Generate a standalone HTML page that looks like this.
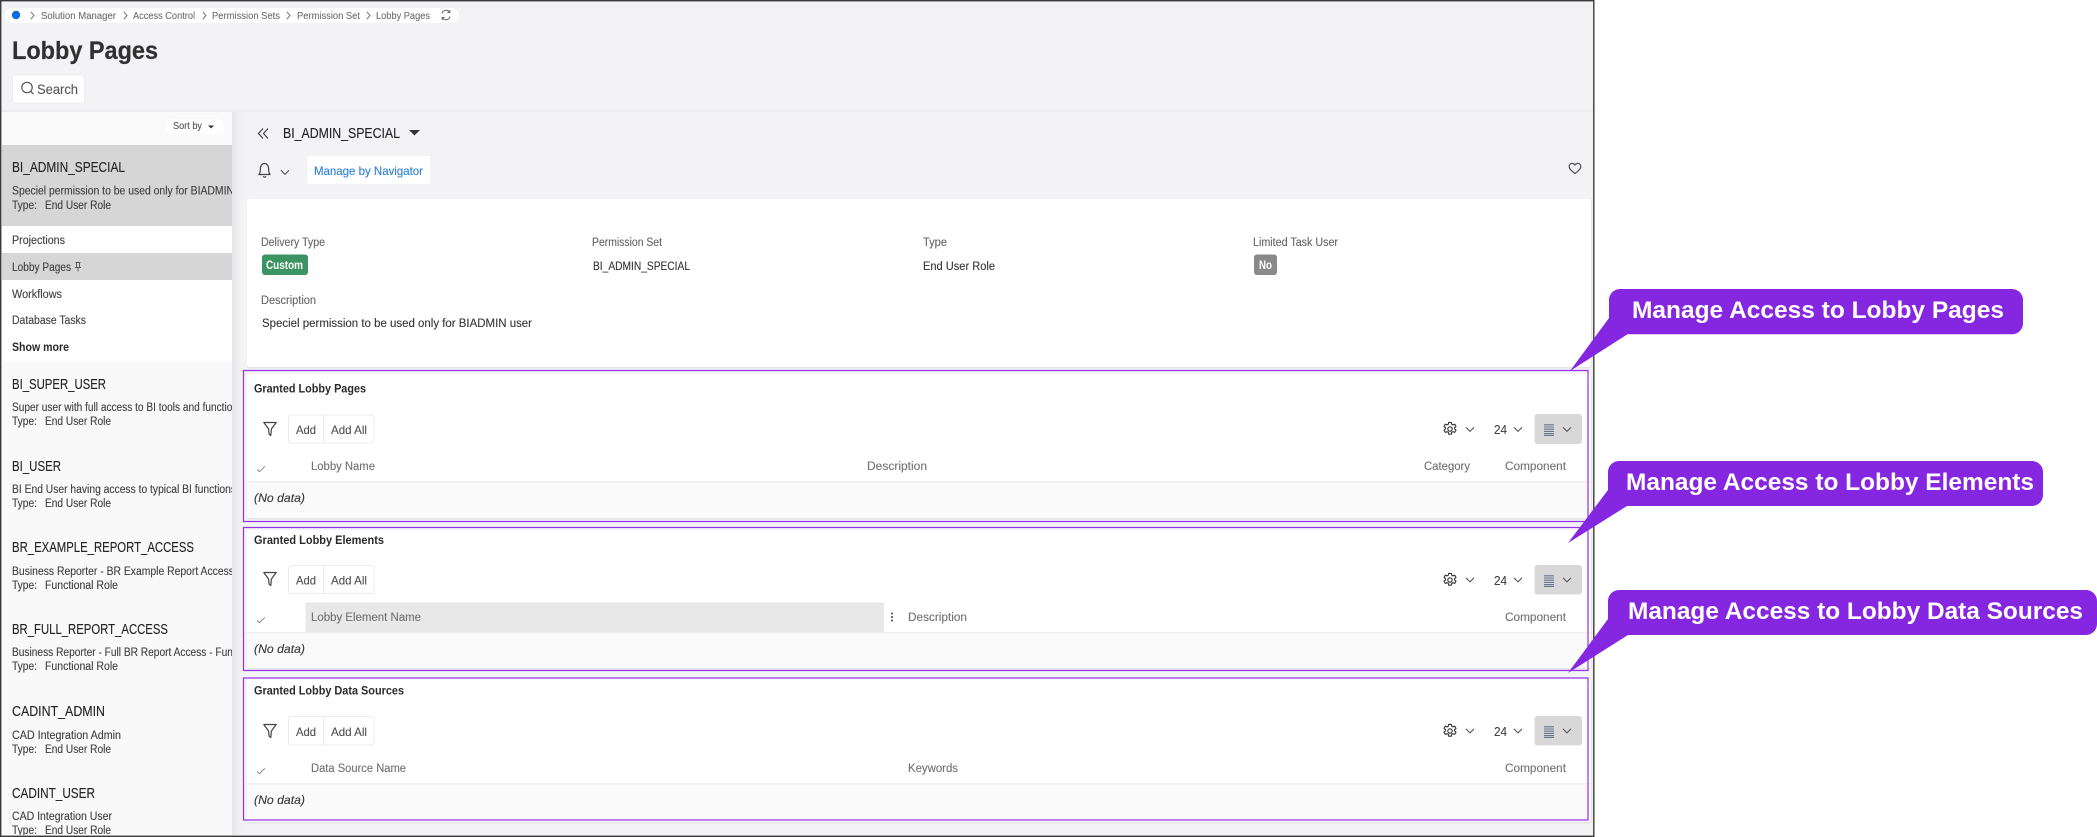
<!DOCTYPE html>
<html lang="en"><head><meta charset="utf-8"><title>Lobby Pages</title>
<style>
html,body{margin:0;padding:0;background:#fff;width:2097px;height:837px;overflow:hidden}
svg{display:block}
text{font-family:"Liberation Sans",Arial,sans-serif;font-size:11.5px;fill:#4a4a4a;stroke:#4a4a4a;stroke-width:.12}
.bc{font-size:10.5px;fill:#707070;stroke:#707070}
.h{font-size:14.5px;fill:#242424;stroke:#242424}
.d{font-size:11.5px;fill:#404040;stroke:#404040}
.l{font-size:11.5px;fill:#666;stroke:#666}
.v{font-size:11.5px;fill:#363636;stroke:#363636}
.b{font-weight:bold;fill:#2a2a2a;stroke:none}
.c{font-size:11.5px;fill:#727272;stroke:#727272}
.a{font-size:12px;fill:#505050;stroke:#505050}
.n{font-size:12px;font-style:italic;fill:#383838;stroke:#383838}
.t{font-size:24px;font-weight:bold;fill:#fff;stroke:none}
.w{font-size:11.5px;font-weight:bold;fill:#fff;stroke:none}
.soft{filter:blur(.28px)}
</style></head><body>
<svg width="2097" height="837" viewBox="0 0 2097 837" xmlns="http://www.w3.org/2000/svg">
<defs>
<symbol id="chv" viewBox="0 0 8 5" overflow="visible"><path d="M.3.6 4 4.4 7.7.6" fill="none" stroke="#555" stroke-width="1.1" stroke-linecap="round" stroke-linejoin="round"/></symbol>
<symbol id="sep" viewBox="0 0 5 9" overflow="visible"><path d="M.8.8 4 4.5.8 8.2" fill="none" stroke="#777" stroke-width="1"/></symbol>
<symbol id="flt" viewBox="0 0 14 15" overflow="visible"><path d="M.8 1h12.400L8.400 7.500 7.800 14 6.100 12.600 5.600 7.500Z" fill="none" stroke="#444" stroke-width="1.200" stroke-linejoin="round"/></symbol>
<symbol id="gear" viewBox="0 0 14 14" overflow="visible"><circle cx="7" cy="7" r="2.200" fill="none" stroke="#333" stroke-width="1.100"/><path d="M5.700.4h2.600l.4 1.800 1.200.7 1.800-.7 1.300 2.200-1.400 1.200v1.400l1.400 1.200-1.300 2.200-1.800-.7-1.200.7-.4 1.800H5.700l-.4-1.800-1.200-.7-1.800.7-1.300-2.200 1.400-1.200V5.600L1 4.400l1.300-2.200 1.800.7 1.200-.7Z" fill="none" stroke="#333" stroke-width="1.100" stroke-linejoin="round"/></symbol>
<symbol id="rows" viewBox="0 0 10 12" overflow="visible"><path d="M0 .8h10M0 3h10M0 5.200h10M0 7.400h10M0 9.600h10M0 11.400h10" stroke="#64748b" stroke-width="1.100"/></symbol>
<symbol id="chk" viewBox="0 0 9 7" overflow="visible"><path d="M.6 4 3 6.200 8.400.8" fill="none" stroke="#888" stroke-width="1"/></symbol>
<clipPath id="lp"><rect x="2" y="112" width="230" height="723"/></clipPath>
<linearGradient id="sh" x1="0" x2="1" y1="0" y2="0"><stop offset="0" stop-color="#e6e5e8"/><stop offset="1" stop-color="#f3f2f5"/></linearGradient>
</defs>

<g class="soft">
<!-- frame -->
<rect x=".7" y=".7" width="1593.100" height="835.600" fill="#f3f2f5" stroke="#3a3a3a" stroke-width="1.400"/>

<!-- breadcrumb -->
<rect x="5" y="8" width="454" height="15" rx="7.500" fill="#fff"/>
<circle cx="16" cy="15" r="4.200" fill="#0b6bdb"/>
<use href="#sep" x="30" y="11" width="5" height="9"/>
<text class="bc" x="41" y="19" textLength="75" lengthAdjust="spacingAndGlyphs">Solution Manager</text>
<use href="#sep" x="123" y="11" width="5" height="9"/>
<text class="bc" x="133" y="19" textLength="62" lengthAdjust="spacingAndGlyphs">Access Control</text>
<use href="#sep" x="202" y="11" width="5" height="9"/>
<text class="bc" x="212" y="19" textLength="68" lengthAdjust="spacingAndGlyphs">Permission Sets</text>
<use href="#sep" x="286" y="11" width="5" height="9"/>
<text class="bc" x="297" y="19" textLength="63" lengthAdjust="spacingAndGlyphs">Permission Set</text>
<use href="#sep" x="366" y="11" width="5" height="9"/>
<text class="bc" x="376" y="19" textLength="54" lengthAdjust="spacingAndGlyphs">Lobby Pages</text>
<path d="M442 13.500a4.200 4.200 0 0 1 7.500-1.500M450 16.500a4.200 4.200 0 0 1-7.500 1.500M449.800 10v2.500h-2.400M442.200 20v-2.500h2.400" fill="none" stroke="#666" stroke-width="1"/>

<!-- title -->
<text x="12" y="59" textLength="146" lengthAdjust="spacingAndGlyphs" style="font-size:25px;font-weight:bold;fill:#303030;stroke:#303030;stroke-width:.2">Lobby Pages</text>
<rect x="12.500" y="75" width="72" height="28" rx="3" fill="#fff" stroke="#eeedf0"/>
<circle cx="27" cy="87.500" r="5.200" fill="none" stroke="#555" stroke-width="1.200"/><path d="M30.700 91.300 33.500 94.200" stroke="#555" stroke-width="1.200"/>
<text x="37" y="94" textLength="41" lengthAdjust="spacingAndGlyphs" style="font-size:14px;fill:#555;stroke:#555">Search</text>

<!-- header separator and left shadow -->
<rect x="2" y="110" width="1591" height="2" fill="#ecebee"/>
<rect x="232" y="112" width="10" height="723" fill="url(#sh)"/>

<!-- left panel -->
<rect x="2" y="112" width="230" height="33" fill="#fafafa"/>
<rect x="166" y="119" width="58" height="15" rx="7.500" fill="#fff"/>
<text x="173" y="129" textLength="29" lengthAdjust="spacingAndGlyphs" style="font-size:10.500px;fill:#555;stroke:#555">Sort by</text>
<path d="M208 125.500h6l-3 3Z" fill="#333"/>
<rect x="2" y="145" width="230" height="81" fill="#d6d6d6"/>
<rect x="2" y="226" width="230" height="136" fill="#fff"/>
<rect x="2" y="253" width="230" height="27" fill="#d6d6d6"/>
<rect x="2" y="362" width="230" height="473" fill="#f9f9f9"/>
<g clip-path="url(#lp)">
<text class="h" x="12" y="172" textLength="113" lengthAdjust="spacingAndGlyphs">BI_ADMIN_SPECIAL</text>
<text class="d" x="12" y="194.500" textLength="222" lengthAdjust="spacingAndGlyphs">Speciel permission to be used only for BIADMIN</text>
<text class="d" x="12" y="209" textLength="25" lengthAdjust="spacingAndGlyphs">Type:</text><text class="d" x="45" y="209" textLength="66" lengthAdjust="spacingAndGlyphs">End User Role</text>
<text class="d" x="12" y="244" textLength="53" lengthAdjust="spacingAndGlyphs">Projections</text>
<text class="d" x="12" y="271" textLength="59" lengthAdjust="spacingAndGlyphs">Lobby Pages</text>
<path d="M75.500 262.500h5M76.500 262.500v5M79.500 262.500v5M75 267.500h6M78 267.500v4" fill="none" stroke="#555" stroke-width=".9"/>
<text class="d" x="12" y="298" textLength="50" lengthAdjust="spacingAndGlyphs">Workflows</text>
<text class="d" x="12" y="324" textLength="74" lengthAdjust="spacingAndGlyphs">Database Tasks</text>
<text class="d b" x="12" y="351" textLength="57" lengthAdjust="spacingAndGlyphs">Show more</text>

<text class="h" x="12" y="389" textLength="94" lengthAdjust="spacingAndGlyphs">BI_SUPER_USER</text>
<text class="d" x="12" y="411" textLength="226" lengthAdjust="spacingAndGlyphs">Super user with full access to BI tools and function</text>
<text class="d" x="12" y="425" textLength="25" lengthAdjust="spacingAndGlyphs">Type:</text><text class="d" x="45" y="425" textLength="66" lengthAdjust="spacingAndGlyphs">End User Role</text>

<text class="h" x="12" y="471" textLength="49" lengthAdjust="spacingAndGlyphs">BI_USER</text>
<text class="d" x="12" y="493" textLength="224" lengthAdjust="spacingAndGlyphs">BI End User having access to typical BI functions</text>
<text class="d" x="12" y="507" textLength="25" lengthAdjust="spacingAndGlyphs">Type:</text><text class="d" x="45" y="507" textLength="66" lengthAdjust="spacingAndGlyphs">End User Role</text>

<text class="h" x="12" y="552" textLength="182" lengthAdjust="spacingAndGlyphs">BR_EXAMPLE_REPORT_ACCESS</text>
<text class="d" x="12" y="575" textLength="222" lengthAdjust="spacingAndGlyphs">Business Reporter - BR Example Report Access</text>
<text class="d" x="12" y="589" textLength="25" lengthAdjust="spacingAndGlyphs">Type:</text><text class="d" x="45" y="589" textLength="73" lengthAdjust="spacingAndGlyphs">Functional Role</text>

<text class="h" x="12" y="634" textLength="156" lengthAdjust="spacingAndGlyphs">BR_FULL_REPORT_ACCESS</text>
<text class="d" x="12" y="656" textLength="226" lengthAdjust="spacingAndGlyphs">Business Reporter - Full BR Report Access - Func</text>
<text class="d" x="12" y="670" textLength="25" lengthAdjust="spacingAndGlyphs">Type:</text><text class="d" x="45" y="670" textLength="73" lengthAdjust="spacingAndGlyphs">Functional Role</text>

<text class="h" x="12" y="716" textLength="93" lengthAdjust="spacingAndGlyphs">CADINT_ADMIN</text>
<text class="d" x="12" y="739" textLength="109" lengthAdjust="spacingAndGlyphs">CAD Integration Admin</text>
<text class="d" x="12" y="753" textLength="25" lengthAdjust="spacingAndGlyphs">Type:</text><text class="d" x="45" y="753" textLength="66" lengthAdjust="spacingAndGlyphs">End User Role</text>

<text class="h" x="12" y="798" textLength="83" lengthAdjust="spacingAndGlyphs">CADINT_USER</text>
<text class="d" x="12" y="820" textLength="100" lengthAdjust="spacingAndGlyphs">CAD Integration User</text>
<text class="d" x="12" y="834" textLength="25" lengthAdjust="spacingAndGlyphs">Type:</text><text class="d" x="45" y="834" textLength="66" lengthAdjust="spacingAndGlyphs">End User Role</text>
</g>

<!-- detail header -->
<path d="M263 128.500 258.500 133.500 263 138.500M268 128.500 263.500 133.500 268 138.500" fill="none" stroke="#444" stroke-width="1.200"/>
<text class="h" x="283" y="138" textLength="117" lengthAdjust="spacingAndGlyphs">BI_ADMIN_SPECIAL</text>
<path d="M409 130h11l-5.500 5.500Z" fill="#333"/>
<path d="M258.800 174.500c1.900-1.700 1.500-3.600 1.600-6 .1-3 1.800-5 4.100-5s4 2 4.100 5c.1 2.400-.3 4.300 1.600 6ZM263 176.300a1.800 1.800 0 0 0 3 0" fill="none" stroke="#444" stroke-width="1.200" stroke-linejoin="round"/>
<use href="#chv" x="281" y="170" width="8" height="5"/>
<rect x="307.500" y="156" width="122.500" height="28" rx="2" fill="#fff"/>
<text x="314" y="175" textLength="109" lengthAdjust="spacingAndGlyphs" style="font-size:12px;fill:#2b7fd6;stroke:#2b7fd6">Manage by Navigator</text>
<path d="M1575 173.500c-3-2.300-5.800-4.400-5.800-7 0-3.400 4-4.200 5.800-1.600 1.800-2.600 5.800-1.800 5.800 1.600 0 2.600-2.800 4.700-5.800 7Z" fill="none" stroke="#555" stroke-width="1.200"/>

<!-- info card -->
<rect x="247" y="200" width="1345" height="168.500" rx="3" fill="#e4e4e6"/>
<rect x="247" y="199" width="1344" height="168" rx="3" fill="#fff"/>
<text class="l" x="261" y="246" textLength="64" lengthAdjust="spacingAndGlyphs">Delivery Type</text>
<rect x="262" y="254.500" width="46" height="20.500" rx="3" fill="#3d9463"/>
<text class="w" x="266" y="269" textLength="37" lengthAdjust="spacingAndGlyphs">Custom</text>
<text class="l" x="592" y="246" textLength="70" lengthAdjust="spacingAndGlyphs">Permission Set</text>
<text class="v" x="593" y="270" textLength="97" lengthAdjust="spacingAndGlyphs">BI_ADMIN_SPECIAL</text>
<text class="l" x="923" y="246" textLength="24" lengthAdjust="spacingAndGlyphs">Type</text>
<text class="v" x="923" y="270" textLength="72" lengthAdjust="spacingAndGlyphs">End User Role</text>
<text class="l" x="1253" y="246" textLength="85" lengthAdjust="spacingAndGlyphs">Limited Task User</text>
<rect x="1254" y="254.500" width="23" height="20.500" rx="3" fill="#8a8a8a"/>
<text class="w" x="1259" y="269" textLength="13" lengthAdjust="spacingAndGlyphs">No</text>
<text class="l" x="261" y="304" textLength="55" lengthAdjust="spacingAndGlyphs">Description</text>
<text class="v" x="262" y="327" textLength="270" lengthAdjust="spacingAndGlyphs">Speciel permission to be used only for BIADMIN user</text>

<!-- section 1 -->
<rect x="247" y="375" width="1345" height="144.500" rx="3" fill="#e4e4e6"/>
<rect x="247" y="374" width="1344" height="144" rx="3" fill="#fff"/>
<rect x="247" y="482" width="1344" height="35.500" fill="#fafafa"/><rect x="247" y="481" width="1344" height="1.500" fill="#efefef"/>
<text class="v b" x="254" y="392.500" textLength="112" lengthAdjust="spacingAndGlyphs">Granted Lobby Pages</text>
<use href="#flt" x="263" y="421.500" width="14" height="15"/>
<rect x="288.500" y="415" width="85.500" height="28" rx="3" fill="#fff" stroke="#ececec"/><path d="M323.500 415v28" stroke="#ececec"/>
<text class="a" x="296" y="434" textLength="20" lengthAdjust="spacingAndGlyphs">Add</text>
<text class="a" x="331" y="434" textLength="36" lengthAdjust="spacingAndGlyphs">Add All</text>
<use href="#gear" x="1443" y="422" width="14" height="14"/><use href="#chv" x="1466" y="427" width="8" height="5"/>
<text class="a" x="1494" y="434" textLength="13" lengthAdjust="spacingAndGlyphs" style="font-size:13px;fill:#404040;stroke:#404040">24</text><use href="#chv" x="1514" y="427" width="8" height="5"/>
<rect x="1534.500" y="414" width="47.500" height="30" rx="3" fill="#d8d8d8"/><use href="#rows" x="1544" y="424" width="10" height="12"/><use href="#chv" x="1563" y="427" width="8" height="5"/>
<use href="#chk" x="256.500" y="465.500" width="9" height="7"/>
<text class="c" x="311" y="470" textLength="64" lengthAdjust="spacingAndGlyphs">Lobby Name</text>
<text class="c" x="867" y="470" textLength="60" lengthAdjust="spacingAndGlyphs">Description</text>
<text class="c" x="1424" y="470" textLength="46" lengthAdjust="spacingAndGlyphs">Category</text>
<text class="c" x="1505" y="470" textLength="61" lengthAdjust="spacingAndGlyphs">Component</text>
<text class="n" x="254" y="502" textLength="51" lengthAdjust="spacingAndGlyphs">(No data)</text>

<!-- section 2 -->
<rect x="247" y="531" width="1345" height="138.500" rx="3" fill="#e4e4e6"/>
<rect x="247" y="530" width="1344" height="138" rx="3" fill="#fff"/>
<rect x="247" y="632.500" width="1344" height="35.500" fill="#fafafa"/><rect x="247" y="632" width="1344" height="1.500" fill="#efefef"/>
<text class="v b" x="254" y="544" textLength="130" lengthAdjust="spacingAndGlyphs">Granted Lobby Elements</text>
<use href="#flt" x="263" y="571.500" width="14" height="15"/>
<rect x="288.500" y="565.500" width="85.500" height="28" rx="3" fill="#fff" stroke="#ececec"/><path d="M323.500 565.500v28" stroke="#ececec"/>
<text class="a" x="296" y="584.500" textLength="20" lengthAdjust="spacingAndGlyphs">Add</text>
<text class="a" x="331" y="584.500" textLength="36" lengthAdjust="spacingAndGlyphs">Add All</text>
<use href="#gear" x="1443" y="573" width="14" height="14"/><use href="#chv" x="1466" y="577.500" width="8" height="5"/>
<text class="a" x="1494" y="585" textLength="13" lengthAdjust="spacingAndGlyphs" style="font-size:13px;fill:#404040;stroke:#404040">24</text><use href="#chv" x="1514" y="577.500" width="8" height="5"/>
<rect x="1534.500" y="565" width="47.500" height="29.500" rx="3" fill="#d8d8d8"/><use href="#rows" x="1544" y="575" width="10" height="12"/><use href="#chv" x="1563" y="577.500" width="8" height="5"/>
<rect x="305.500" y="602.500" width="578.500" height="29.500" fill="#e8e8e8"/>
<use href="#chk" x="256.500" y="616.500" width="9" height="7"/>
<text class="c" x="311" y="621" textLength="110" lengthAdjust="spacingAndGlyphs">Lobby Element Name</text>
<circle cx="892" cy="613.500" r="1" fill="#444"/><circle cx="892" cy="617" r="1" fill="#444"/><circle cx="892" cy="620.500" r="1" fill="#444"/>
<text class="c" x="908" y="621" textLength="59" lengthAdjust="spacingAndGlyphs">Description</text>
<text class="c" x="1505" y="621" textLength="61" lengthAdjust="spacingAndGlyphs">Component</text>
<text class="n" x="254" y="653" textLength="51" lengthAdjust="spacingAndGlyphs">(No data)</text>

<!-- section 3 -->
<rect x="247" y="680" width="1345" height="143.500" rx="3" fill="#e4e4e6"/>
<rect x="247" y="679" width="1344" height="143" rx="3" fill="#fff"/>
<rect x="247" y="783.500" width="1344" height="38" fill="#fafafa"/><rect x="247" y="783" width="1344" height="1.500" fill="#efefef"/>
<text class="v b" x="254" y="694.500" textLength="150" lengthAdjust="spacingAndGlyphs">Granted Lobby Data Sources</text>
<use href="#flt" x="263" y="723.500" width="14" height="15"/>
<rect x="288.500" y="716.500" width="85.500" height="28.500" rx="3" fill="#fff" stroke="#ececec"/><path d="M323.500 716.500v28.500" stroke="#ececec"/>
<text class="a" x="296" y="736" textLength="20" lengthAdjust="spacingAndGlyphs">Add</text>
<text class="a" x="331" y="736" textLength="36" lengthAdjust="spacingAndGlyphs">Add All</text>
<use href="#gear" x="1443" y="724" width="14" height="14"/><use href="#chv" x="1466" y="728.500" width="8" height="5"/>
<text class="a" x="1494" y="736" textLength="13" lengthAdjust="spacingAndGlyphs" style="font-size:13px;fill:#404040;stroke:#404040">24</text><use href="#chv" x="1514" y="728.500" width="8" height="5"/>
<rect x="1534.500" y="716" width="47.500" height="29.500" rx="3" fill="#d8d8d8"/><use href="#rows" x="1544" y="726" width="10" height="12"/><use href="#chv" x="1563" y="728.500" width="8" height="5"/>
<use href="#chk" x="256.500" y="767.500" width="9" height="7"/>
<text class="c" x="311" y="772" textLength="95" lengthAdjust="spacingAndGlyphs">Data Source Name</text>
<text class="c" x="908" y="772" textLength="50" lengthAdjust="spacingAndGlyphs">Keywords</text>
<text class="c" x="1505" y="772" textLength="61" lengthAdjust="spacingAndGlyphs">Component</text>
<text class="n" x="254" y="804" textLength="51" lengthAdjust="spacingAndGlyphs">(No data)</text>
</g>

<!-- highlight boxes -->
<g fill="none" stroke="#9530ea" stroke-width="1.200">
<rect x="243.500" y="370.500" width="1344.500" height="151"/>
<rect x="243.500" y="527.500" width="1344.500" height="143"/>
<rect x="243.500" y="678" width="1344.500" height="142"/>
</g>

<!-- callouts -->
<g fill="#8526e0">
<path d="M1620 289H2012a11 11 0 0 1 11 11V323.300a11 11 0 0 1-11 11H1627.500L1570 371 1609 318V300a11 11 0 0 1 11-11Z"/>
<path d="M1619 461H2032a11 11 0 0 1 11 11V495a11 11 0 0 1-11 11H1627L1568 543 1608 490V472a11 11 0 0 1 11-11Z"/>
<path d="M1619 590H2086a11 11 0 0 1 11 11V624a11 11 0 0 1-11 11H1628L1568 673 1608 619V601a11 11 0 0 1 11-11Z"/>
</g>
<text class="t" x="1632" y="318" textLength="372" lengthAdjust="spacingAndGlyphs">Manage Access to Lobby Pages</text>
<text class="t" x="1626" y="490" textLength="408" lengthAdjust="spacingAndGlyphs">Manage Access to Lobby Elements</text>
<text class="t" x="1628" y="619" textLength="455" lengthAdjust="spacingAndGlyphs">Manage Access to Lobby Data Sources</text>
</svg>
</body></html>
